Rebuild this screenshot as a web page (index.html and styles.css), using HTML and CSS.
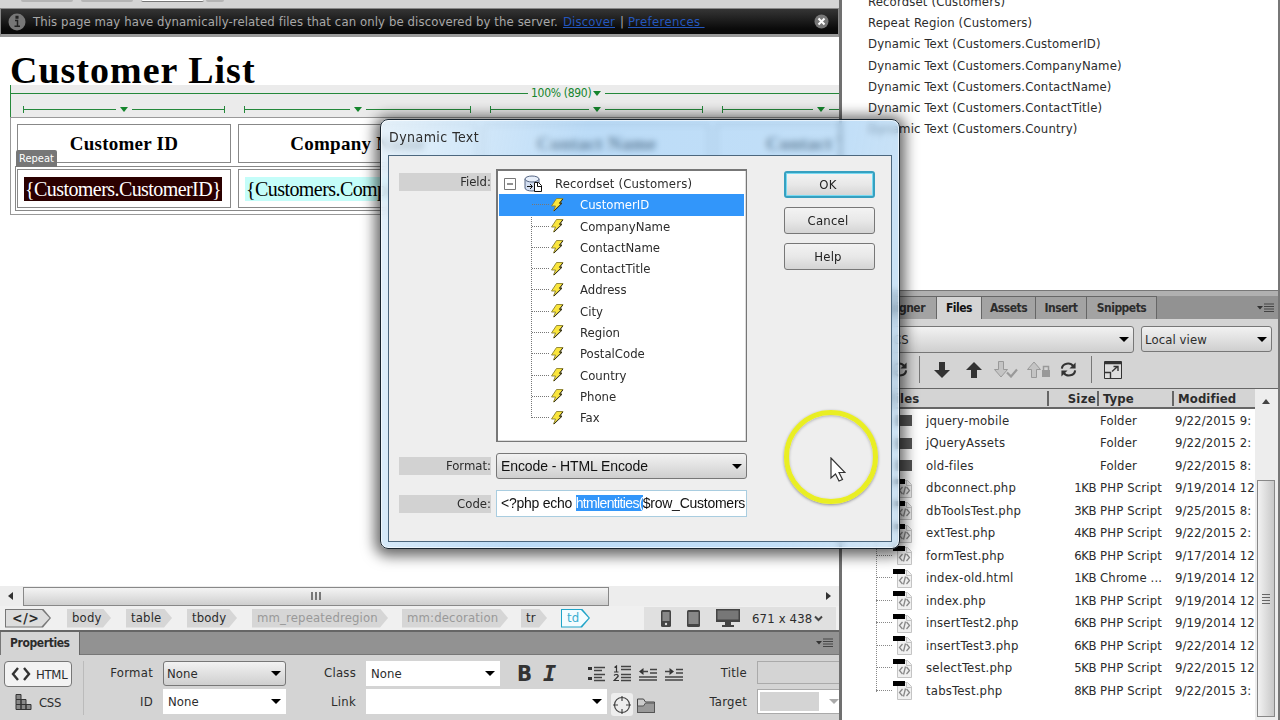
FILE: index.html
```
<!DOCTYPE html>
<html lang="en">
<head>
    <meta charset="UTF-8">
    <meta name="viewport" content="width=device-width, initial-scale=1.0">
    <title>Customer List</title>
    <link rel="stylesheet" href="styles.css">
</head>
<body>

    <!-- Shared icons -->
    <svg class="defs" width="0" height="0">
        <defs>
            <symbol id="bolt" viewBox="0 0 14 16">
                <path d="M6.500 1.500H13L9.500 6h2.500L3.500 14l2-5H1.500z" fill="#fae53c" stroke="#8a8030" stroke-width="0.900"/>
                <path d="M12.800 2 9.500 6.300H12L4 14" fill="none" stroke="#332f18" stroke-width="1"/>
            </symbol>
            <symbol id="doc" viewBox="0 0 20 20">
                <path d="M4.500 2.500h10l4 4v13h-14z" fill="#f0f0f0" stroke="#c4c4c4"/>
                <path d="M13.500 2.500v5h5" fill="none" stroke="#c4c4c4"/>
                <path d="m9.500 9-3 3.500 3 3.500M13.500 9l3 3.500-3 3.500M12.500 8.500l-2 8" fill="none" stroke="#888" stroke-width="1.300"/>
                <path d="M0 1h12v5H0z" fill="#000"/>
            </symbol>
            <symbol id="folder" viewBox="0 0 20 20">
                <path d="M2 5h17v11H2z" fill="#555"/>
            </symbol>
            <symbol id="menu" viewBox="0 0 18 10">
                <path d="M0 3h6L3 6.500z" fill="#333"/>
                <path d="M7 1h10M7 3.500h10M7 6h10M7 8.500h10" stroke="#444"/>
            </symbol>
            <symbol id="sync" viewBox="0 0 18 18">
                <path d="M2 8c.5-6 9-7 12-2.500M16 10c-.5 6-9 7-12 2.500" fill="none" stroke="#333" stroke-width="2.200"/>
                <path d="M16.500 1.500V8H10zM1.500 16.500V10H8z" fill="#333"/>
            </symbol>
        </defs>
    </svg>

    <div class="workspace">

        <!-- Document window -->
        <main class="document">
            <div class="toolbar-edge"><span></span><span></span><span class="field"></span><span class="small"></span></div>
            <div class="notice">
                <svg width="18" height="18" viewBox="0 0 18 18"><circle cx="9" cy="9" r="8.500" fill="#777"/><path d="M7 7.500h2.500V13M6.500 13.300h5.500M8.200 3.500h1.600v1.500H8.200z" fill="none" stroke="#222" stroke-width="1.500"/></svg>
                <span class="notice-text">This page may have dynamically-related files that can only be discovered by the server.</span>
                <a class="discover">Discover</a>
                <span class="bar">|</span>
                <a class="prefs">Preferences&nbsp;</a>
                <svg class="close" width="15" height="15" viewBox="0 0 15 15"><circle cx="7.500" cy="7.500" r="7" fill="#777"/><path d="m4.500 4.500 6 6m0-6-6 6" stroke="#fff" stroke-width="2"/></svg>
            </div>

            <div class="page">
                <h1>Customer List</h1>
                <div class="rulers">
                    <div class="ruler-total">
                        <i class="line first"></i><span>100% (890)</span><b class="tri"></b><i class="line"></i>
                    </div>
                    <div class="ruler-cols columns">
                        <div class="ruler"><i class="line"></i><b class="tri"></b><i class="line"></i></div>
                        <div class="ruler"><i class="line"></i><b class="tri"></b><i class="line"></i></div>
                        <div class="ruler"><i class="line"></i><b class="tri"></b><i class="line"></i></div>
                        <div class="ruler"><i class="line"></i><b class="tri"></b><i class="line"></i></div>
                    </div>
                </div>
                <div class="data-table">
                    <div class="columns head">
                        <div class="cell">Customer ID</div>
                        <div class="cell">Company Name</div>
                        <div class="cell">Contact Name</div>
                        <div class="cell">Contact Title</div>
                    </div>
                    <div class="repeat">
                        <span class="repeat-tag">Repeat</span>
                        <div class="columns">
                            <div class="cell"><span class="dyn selected">{Customers.CustomerID}</span></div>
                            <div class="cell"><span class="dyn">{Customers.CompanyName}</span></div>
                            <div class="cell"></div>
                            <div class="cell"></div>
                        </div>
                    </div>
                </div>
            </div>

            <div class="hscroll">
                <b class="arrow-left"></b>
                <div class="hthumb"><i></i><i></i><i></i></div>
                <b class="arrow-right"></b>
            </div>

            <div class="tag-bar">
                <span class="tag outline code">&lt;/&gt;</span>
                <span class="tag t-body">body</span>
                <span class="tag t-table">table</span>
                <span class="tag t-tbody">tbody</span>
                <span class="tag muted t-region">mm_repeatedregion</span>
                <span class="tag muted t-deco">mm:decoration</span>
                <span class="tag t-tr">tr</span>
                <span class="tag outline current">td</span>
                <div class="devices">
                    <svg width="10" height="17" viewBox="0 0 10 17"><rect width="10" height="17" rx="1.500" fill="#444"/><path d="M1.500 2h7v9h-7z" fill="#888"/><circle cx="5" cy="14" r="1.200" fill="#ddd"/></svg>
                    <svg width="13" height="17" viewBox="0 0 13 17"><rect width="13" height="17" rx="1.500" fill="#444"/><path d="M1.500 2h10v12h-10z" fill="#888"/></svg>
                    <svg width="24" height="18" viewBox="0 0 24 18"><path d="M0 0h24v13H0zM9 13h6v3h3v2H6v-2h3z" fill="#444"/><path d="M1.500 1.500h21v9h-21z" fill="#777"/></svg>
                    <span>671 x 438</span>
                    <svg class="chev" width="9" height="7" viewBox="0 0 9 7"><path d="m1 1.500 3.500 3.500L8 1.500" fill="none" stroke="#444" stroke-width="2"/></svg>
                </div>
            </div>

            <!-- Property inspector -->
            <section class="properties">
                <div class="prop-head"><span class="prop-tab">Properties</span><svg width="18" height="10"><use href="#menu"/></svg></div>
                <div class="prop-body">
                    <div class="modes">
                        <div class="mode active"><svg width="20" height="14" viewBox="0 0 20 14"><path d="m7 1-5 6 5 6M13 1l5 6-5 6" fill="none" stroke="#333" stroke-width="2.400"/></svg>HTML</div>
                        <div class="mode css"><svg width="17" height="16" viewBox="0 0 17 16"><path d="M1 .5h5v5H1zM1 5.500h5v5H1zM1 10.500h5v5H1zM6 5.500h5v5H6zM6 10.500h5v5H6zM11 10.500h5v5h-5z" fill="#888" stroke="#333"/></svg>CSS</div>
                    </div>
                    <div class="labels l-format"><span>Format</span><span>ID</span></div>
                    <div class="fields f-format">
                        <div class="drop raised">None<b></b></div>
                        <div class="drop">None<b></b></div>
                    </div>
                    <div class="labels l-class"><span>Class</span><span>Link</span></div>
                    <div class="fields f-class">
                        <div class="line-one">
                            <div class="drop">None<b></b></div>
                            <span class="bold">B</span><span class="italic">I</span>
                            <svg class="ul" width="18" height="16" viewBox="0 0 18 16"><path d="M0 1h4v3H0zM0 11h4v3H0z" fill="#333"/><path d="M6 1.500h11M6 4.500h8M6 8.500h11M6 11.500h8M6 14.500h11" stroke="#444" stroke-width="1.300"/></svg>
                            <svg class="ol" width="19" height="17" viewBox="0 0 19 17"><path d="M1.500 2.500 3.500 1v6M1 7h4.500M1 10.500c2-2 5-.5 4 1L1 15.500h5" fill="none" stroke="#333" stroke-width="1.200"/><path d="M8 1.500h10M8 4.500h10M8 9.500h10M8 12.500h10M8 15.500h10" stroke="#444" stroke-width="1.300"/></svg>
                            <svg class="out" width="18" height="14" viewBox="0 0 18 14"><path d="M0 4.500 4.500 1v7z" fill="#333"/><path d="M3 4.500h6M11 2.500h7M11 6h7M0 10h18M0 13h18" stroke="#444" stroke-width="1.600"/></svg>
                            <svg class="in" width="18" height="14" viewBox="0 0 18 14"><path d="M9 4.500 4.500 1v7z" fill="#333"/><path d="M0 4.500h6M11 2.500h7M11 6h7M0 10h18M0 13h18" stroke="#444" stroke-width="1.600"/></svg>
                        </div>
                        <div class="line-two">
                            <div class="drop wide"><b></b></div>
                            <span class="target-btn"><svg width="18" height="18" viewBox="0 0 18 18"><circle cx="9" cy="9" r="7.500" fill="none" stroke="#444" stroke-width="1.200"/><path d="M9 0v5M9 13v5M0 9h5M13 9h5" stroke="#444" stroke-width="1.200"/></svg></span>
                            <svg width="18" height="15" viewBox="0 0 18 15"><path d="M.5 14.500V1h6l2 3h9v10.500z" fill="#ccc" stroke="#444"/><path d="M.5 8h6l2-3h9v9.500H.5z" fill="#999" stroke="#555"/></svg>
                        </div>
                    </div>
                    <div class="labels l-title"><span>Title</span><span>Target</span></div>
                    <div class="fields f-title"><div class="off"></div><div class="target"><i></i><b></b></div></div>
                </div>
            </section>
        </main>

        <!-- Panels -->
        <aside class="panels">
            <ul class="behaviors">
                <li>Recordset (Customers)</li>
                <li>Repeat Region (Customers)</li>
                <li>Dynamic Text (Customers.CustomerID)</li>
                <li>Dynamic Text (Customers.CompanyName)</li>
                <li>Dynamic Text (Customers.ContactName)</li>
                <li>Dynamic Text (Customers.ContactTitle)</li>
                <li>Dynamic Text (Customers.Country)</li>
            </ul>
            <div class="tabs">
                <span class="tab designer">CSS Designer</span>
                <span class="tab files active">Files</span>
                <span class="tab assets">Assets</span>
                <span class="tab insert">Insert</span>
                <span class="tab snippets">Snippets</span>
                <svg width="18" height="10"><use href="#menu"/></svg>
            </div>
            <div class="file-tools">
                <div class="selects">
                    <div class="drop raised site">CS<b></b></div>
                    <div class="drop raised view">Local view<b></b></div>
                </div>
                <div class="file-icons">
                    <svg class="i-refresh" width="17" height="17"><use href="#sync"/></svg>
                    <i class="sep"></i>
                    <svg class="i-get" width="16" height="16" viewBox="0 0 16 16"><path d="M5 0h6v8h5l-8 8-8-8h5z" fill="#333"/></svg>
                    <svg class="i-put" width="16" height="16" viewBox="0 0 16 16"><path d="M5 16h6V8h5L8 0 0 8h5z" fill="#333"/></svg>
                    <svg class="i-out" width="24" height="17" viewBox="0 0 24 17"><path d="M4.500.5h5v8h4L7 16 .5 8.500h4z" fill="#c4c4c4" stroke="#999"/><path d="m13 11.500 4 4 6-7" fill="none" stroke="#999" stroke-width="2.200"/></svg>
                    <svg class="i-in" width="24" height="17" viewBox="0 0 24 17"><path d="M4.500 16.500h5v-8h4L7 1 .5 8.500h4z" fill="#c4c4c4" stroke="#999"/><path d="M15 9h8v7h-8z" fill="#999"/><path d="M16.500 9V5.500h5V9" fill="none" stroke="#999" stroke-width="1.500"/></svg>
                    <svg class="i-sync" width="17" height="17"><use href="#sync"/></svg>
                    <i class="sep last"></i>
                    <svg class="i-expand" width="18" height="18" viewBox="0 0 18 18"><path d="M.5.500h17v17H.5z" fill="#ddd" stroke="#333"/><path d="M1 2h16" stroke="#333" stroke-width="2.500"/><path d="M.5 11.500h6v6M8 10.500l5-4.500M9.500 5.500H14V10" fill="none" stroke="#333" stroke-width="1.400"/></svg>
                </div>
            </div>
            <div class="file-panel">
                <div class="file-table">
                    <div class="file-row header"><span class="name">Local Files</span><span class="size">Size</span><span class="type">Type</span><span class="mod">Modified</span></div>
                    <div class="file-list">
                        <div class="file-row"><svg><use href="#folder"/></svg><span class="name">jquery-mobile</span><span class="size"></span><span class="type">Folder</span><span class="mod">9/22/2015 9:</span></div>
                        <div class="file-row"><svg><use href="#folder"/></svg><span class="name">jQueryAssets</span><span class="size"></span><span class="type">Folder</span><span class="mod">9/22/2015 2:</span></div>
                        <div class="file-row"><svg><use href="#folder"/></svg><span class="name">old-files</span><span class="size"></span><span class="type">Folder</span><span class="mod">9/22/2015 8:</span></div>
                        <div class="file-row"><svg><use href="#doc"/></svg><span class="name">dbconnect.php</span><span class="size">1KB</span><span class="type">PHP Script</span><span class="mod">9/19/2014 12</span></div>
                        <div class="file-row"><svg><use href="#doc"/></svg><span class="name">dbToolsTest.php</span><span class="size">3KB</span><span class="type">PHP Script</span><span class="mod">9/25/2015 8:</span></div>
                        <div class="file-row"><svg><use href="#doc"/></svg><span class="name">extTest.php</span><span class="size">4KB</span><span class="type">PHP Script</span><span class="mod">9/22/2015 2:</span></div>
                        <div class="file-row"><svg><use href="#doc"/></svg><span class="name">formTest.php</span><span class="size">6KB</span><span class="type">PHP Script</span><span class="mod">9/17/2014 12</span></div>
                        <div class="file-row"><svg><use href="#doc"/></svg><span class="name">index-old.html</span><span class="size">1KB</span><span class="type">Chrome ...</span><span class="mod">9/19/2014 12</span></div>
                        <div class="file-row"><svg><use href="#doc"/></svg><span class="name">index.php</span><span class="size">1KB</span><span class="type">PHP Script</span><span class="mod">9/19/2014 12</span></div>
                        <div class="file-row"><svg><use href="#doc"/></svg><span class="name">insertTest2.php</span><span class="size">6KB</span><span class="type">PHP Script</span><span class="mod">9/19/2014 12</span></div>
                        <div class="file-row"><svg><use href="#doc"/></svg><span class="name">insertTest3.php</span><span class="size">6KB</span><span class="type">PHP Script</span><span class="mod">9/22/2014 12</span></div>
                        <div class="file-row"><svg><use href="#doc"/></svg><span class="name">selectTest.php</span><span class="size">5KB</span><span class="type">PHP Script</span><span class="mod">9/22/2015 12</span></div>
                        <div class="file-row"><svg><use href="#doc"/></svg><span class="name">tabsTest.php</span><span class="size">8KB</span><span class="type">PHP Script</span><span class="mod">9/22/2015 3:</span></div>
                    </div>
                </div>
                <div class="vscroll">
                    <b class="arrow-up"></b>
                    <div class="vthumb"><i></i><i></i><i></i><i></i></div>
                </div>
            </div>
        </aside>
    </div>

    <!-- Dynamic Text dialog -->
    <div class="dialog">
        <div class="dialog-title">Dynamic Text</div>
        <div class="dialog-body">
            <div class="form">
                <label>Field:</label>
                <div class="tree">
                    <div class="tree-root">
                        <svg width="12" height="12" viewBox="0 0 12 12"><path d="M.5.500h11v11H.5z" fill="#fff" stroke="#777"/><path d="M3 6h6" stroke="#222"/></svg>
                        <svg width="18" height="18" viewBox="0 0 18 18"><path d="M1 4v9c0 4 14 4 14 0V4" fill="#d3def0" stroke="#556583"/><ellipse cx="8" cy="4" rx="7" ry="3" fill="#e8effa" stroke="#556583"/><path d="M10.500 7.500h4l3 3v6h-7z" fill="#fff" stroke="#111"/><path d="M13.500 8v3.500h4M3 11.500h5M6 9l2.500 2.500L6 14" fill="none" stroke="#111"/></svg>
                        Recordset (Customers)
                    </div>
                    <div class="tree-item selected"><svg><use href="#bolt"/></svg>CustomerID</div>
                    <div class="tree-item"><svg><use href="#bolt"/></svg>CompanyName</div>
                    <div class="tree-item"><svg><use href="#bolt"/></svg>ContactName</div>
                    <div class="tree-item"><svg><use href="#bolt"/></svg>ContactTitle</div>
                    <div class="tree-item"><svg><use href="#bolt"/></svg>Address</div>
                    <div class="tree-item"><svg><use href="#bolt"/></svg>City</div>
                    <div class="tree-item"><svg><use href="#bolt"/></svg>Region</div>
                    <div class="tree-item"><svg><use href="#bolt"/></svg>PostalCode</div>
                    <div class="tree-item"><svg><use href="#bolt"/></svg>Country</div>
                    <div class="tree-item"><svg><use href="#bolt"/></svg>Phone</div>
                    <div class="tree-item"><svg><use href="#bolt"/></svg>Fax</div>
                </div>
                <label>Format:</label>
                <div class="drop raised format">Encode - HTML Encode<b></b></div>
                <label>Code:</label>
                <div class="code-input">&lt;?php echo <mark>htmlentities(</mark>$row_Customers</div>
            </div>
            <div class="buttons">
                <button class="default">OK</button>
                <button>Cancel</button>
                <button>Help</button>
            </div>
        </div>
    </div>

    <!-- Pointer highlight -->
    <div class="ring"></div>
    <svg class="pointer" width="16" height="26" viewBox="0 0 16 26"><path d="M1 1v20l4.500-4 3.500 7 3.500-1.500-3.500-7H15z" fill="#fff" stroke="#333" stroke-width="1.200"/></svg>

</body>
</html>
```
FILE: styles.css
```
* {
    box-sizing: border-box;
}
body {
    margin: 0;
    width: 1280px;
    height: 720px;
    overflow: hidden;
    position: relative;
    font-family: "DejaVu Sans Condensed", "Noto Sans", sans-serif;
    font-size: 13px;
    color: #2c2c2c;
    background-color: #fff;
}
.defs {
    position: absolute;
}
svg {
    flex: none;
}
.workspace {
    display: flex;
    height: 720px;
}
.document {
    width: 839px;
    height: 720px;
    flex: none;
    display: flex;
    flex-direction: column;
    overflow: hidden;
}

/* notice bar */
.toolbar-edge {
    height: 8px;
    flex: none;
    display: flex;
    gap: 8px;
    padding-left: 21px;
    background-color: #d4d4d4;
}
.toolbar-edge span {
    width: 52px;
    height: 2px;
    border-radius: 0 0 3px 3px;
    background-color: #b5b5b5;
}
.toolbar-edge .field {
    width: 63px;
    background-color: #fff;
    border-bottom: 1px solid #777;
}
.toolbar-edge .small {
    width: 18px;
    margin-left: -6px;
}
.notice {
    height: 29px;
    flex: none;
    display: flex;
    align-items: center;
    padding: 0 9px 0 7px;
    border: 1px solid #888;
    border-bottom: 3px solid #999;
    background: linear-gradient(#353535, #0a0a0a 80%);
    color: #a8a8a8;
    white-space: nowrap;
}
.notice-text {
    margin-left: 7px;
    letter-spacing: 0.100px;
}
.notice a {
    color: #2457bd;
    text-decoration: underline;
}
.discover {
    margin-left: 5px;
    letter-spacing: 0.150px;
}
.notice .bar {
    margin: 0 4px 0 5px;
}
.prefs {
    letter-spacing: 0.350px;
}
.close {
    margin-left: auto;
}

/* page being edited */
.page {
    height: 549px;
    flex: none;
    padding-left: 10px;
    background-color: #fff;
    font-family: "Liberation Serif", serif;
    color: #000;
}
h1 {
    margin: 0;
    height: 48px;
    line-height: 67px;
    font-size: 38px;
    letter-spacing: 1px;
    white-space: nowrap;
}
.rulers {
    height: 32px;
    border-left: 1px solid #27893b;
    background-color: #ebebeb;
}
.ruler-total {
    height: 16px;
    display: flex;
    align-items: center;
    font-family: "DejaVu Sans Condensed", sans-serif;
    font-size: 12px;
    letter-spacing: -0.300px;
    color: #15852c;
}
.line {
    flex: 1;
    height: 1px;
    background-color: #24883a;
}
.line.first {
    flex: none;
    width: 517px;
    margin-right: 3px;
}
.tri {
    border: 4px solid transparent;
    border-top: 5px solid #15852c;
    border-bottom: 0;
    margin: 0 4px;
}
.ruler-total .tri {
    margin: 1px 4px 0 2px;
}
.columns {
    display: grid;
    grid-template-columns: 214px 239px 225px 210px;
    column-gap: 7px;
}
.ruler-cols {
    padding: 5px 0 0 6px;
}
.ruler {
    display: flex;
    align-items: center;
    height: 7px;
    margin: 0 6px;
    border-left: 1px solid #24883a;
    border-right: 1px solid #24883a;
}
.data-table {
    width: 940px;
    height: 98px;
    border: 1px solid #999;
    padding: 6px 0 0 4px;
}
.head {
    padding-left: 2px;
}
.cell {
    height: 39px;
    border: 1px solid #888;
    display: flex;
    align-items: center;
    padding-left: 6px;
    font-size: 20px;
}
.head .cell {
    justify-content: center;
    padding: 0;
    font-size: 19px;
    font-weight: bold;
    letter-spacing: 0.250px;
}
.repeat {
    position: relative;
    margin-top: 3px;
    height: 45px;
    border: 1px solid #888;
    padding: 2px 0 0 1px;
}
.repeat-tag {
    position: absolute;
    left: 0;
    top: -17px;
    width: 41px;
    height: 17px;
    line-height: 17px;
    text-align: center;
    border-radius: 2px 2px 0 0;
    background-color: #777;
    color: #fff;
    font-family: "DejaVu Sans Condensed", sans-serif;
    font-size: 11px;
}
.dyn {
    height: 24px;
    line-height: 24px;
    padding: 0 1px;
    letter-spacing: -0.570px;
    background-color: #c4fdf9;
}
.dyn.selected {
    background-color: #2b0000;
    color: #fff;
}

/* horizontal scrollbar */
.hscroll {
    height: 20px;
    flex: none;
    display: flex;
    align-items: center;
    padding: 0 8px;
    background-color: #ededed;
}
.arrow-left, .arrow-right {
    border: 4px solid transparent;
}
.arrow-left {
    border-left: 0;
    border-right: 5px solid #333;
}
.arrow-right {
    border-right: 0;
    border-left: 5px solid #333;
    margin-left: auto;
}
.hthumb {
    width: 586px;
    height: 19px;
    margin-left: 10px;
    border: 1px solid #888;
    background: linear-gradient(#f4f4f4, #cfcfcf);
    display: flex;
    align-items: center;
    justify-content: center;
    gap: 2px;
}
.hthumb i {
    width: 2px;
    height: 8px;
    background-color: #777;
}

/* tag selector */
.tag-bar {
    height: 24px;
    flex: none;
    display: flex;
    align-items: center;
    padding-left: 5px;
    background-color: #f0f0f0;
    letter-spacing: 0.150px;
}
.tag {
    height: 19px;
    line-height: 18px;
    padding-left: 5px;
    background-color: #d6d6d6;
    clip-path: polygon(0 0, calc(100% - 8px) 0, 100% 50%, calc(100% - 8px) 100%, 0 100%);
    white-space: nowrap;
    flex: none;
}
.muted {
    color: #999;
}
.t-body { width: 44px; margin-left: 16px; }
.t-table { width: 46px; margin-left: 15px; }
.t-tbody { width: 50px; margin-left: 15px; }
.t-region { width: 136px; margin-left: 15px; }
.t-deco { width: 106px; margin-left: 14px; }
.t-tr { width: 26px; margin-left: 13px; }
.outline {
    position: relative;
    z-index: 0;
    background-color: #777;
}
.outline::before {
    content: "";
    position: absolute;
    inset: 1px 1.500px 1px 1px;
    z-index: -1;
    background-color: #ddd;
    clip-path: polygon(0 0, calc(100% - 8px) 0, 100% 50%, calc(100% - 8px) 100%, 0 100%);
}
.code {
    width: 46px;
    padding-left: 7px;
    font-weight: bold;
    font-size: 14px;
    letter-spacing: 0.600px;
}
.current {
    width: 29px;
    margin-left: 14px;
    padding-left: 6px;
    color: #3aaed0;
    background-color: #20a4c8;
}
.current::before {
    background-color: #f4fcff;
}
.devices {
    width: 192px;
    height: 23px;
    margin-left: auto;
    margin-right: 3px;
    display: flex;
    align-items: center;
    padding-left: 17px;
    background-color: #e0e0e0;
    white-space: nowrap;
}
.devices svg + svg {
    margin-left: 16px;
}
.devices span {
    margin: 0 2px 0 12px;
}

/* property inspector */
.properties {
    flex: 1;
    border-top: 2px solid #666;
    background-color: #d4d4d4;
}
.prop-head {
    height: 23px;
    display: flex;
    align-items: center;
    background-color: #929292;
    border-bottom: 1px solid #777;
    padding-right: 5px;
}
.prop-head svg {
    margin-left: auto;
}
.prop-tab {
    width: 80px;
    height: 23px;
    line-height: 23px;
    padding-left: 9px;
    background-color: #d4d4d4;
    border-left: 1px solid #777;
    border-right: 1px solid #666;
    font-weight: bold;
    font-size: 12px;
    letter-spacing: -0.400px;
}
.prop-body {
    display: flex;
    padding: 6px 0 0 4px;
    height: 65px;
}
.modes {
    width: 80px;
    height: 54px;
    border-right: 1px solid #bbb;
}
.mode {
    width: 68px;
    height: 26px;
    display: flex;
    align-items: center;
    gap: 5px;
    padding-left: 6px;
    border: 1px solid transparent;
    letter-spacing: -0.300px;
}
.mode.active {
    border-color: #777;
    border-radius: 4px;
    background-color: #f3f3f3;
}
.css {
    margin-top: 2px;
    padding-left: 10px;
    gap: 7px;
}
.labels {
    display: flex;
    flex-direction: column;
    gap: 5px;
    text-align: right;
    letter-spacing: 0.250px;
}
.labels span {
    height: 24px;
    line-height: 24px;
}
.l-format { width: 69px; }
.l-class { width: 70px; }
.l-title { width: 61px; }
.fields {
    display: flex;
    flex-direction: column;
    gap: 3px;
    margin-left: 10px;
}
.f-format { width: 123px; }
.f-class { width: 320px; }
.drop {
    height: 25px;
    display: flex;
    align-items: center;
    justify-content: space-between;
    padding: 0 5px;
    background-color: #fff;
    letter-spacing: 0.100px;
}
.drop b, .target b {
    border: 5px solid transparent;
    border-top: 5px solid #000;
    border-bottom: 0;
}
.raised {
    border: 1px solid #777;
    border-radius: 3px;
    padding: 0 4px 0 3px;
    background: linear-gradient(#f2f2f2, #cfcfcf);
}
.line-one, .line-two {
    display: flex;
    height: 25px;
    align-items: center;
}
.line-one .drop {
    width: 134px;
}
.bold, .italic {
    font-size: 22px;
    font-weight: bold;
    color: #333;
    width: 16px;
    line-height: 24px;
}
.bold {
    margin-left: 17px;
}
.italic {
    margin-left: 10px;
    font-family: "DejaVu Sans Mono", monospace;
    font-style: italic;
}
.ul { margin-left: 29px; }
.ol { margin-left: 7px; }
.out { margin-left: 7px; }
.in { margin-left: 8px; }
.wide {
    width: 241px;
    justify-content: flex-end;
}
.target-btn {
    width: 22px;
    height: 23px;
    margin: 6px 4px 0 4px;
    display: flex;
    align-items: center;
    justify-content: center;
    background-color: #eee;
    border-radius: 3px;
}
.line-two > svg {
    margin-top: 7px;
}
.f-title {
    width: 82px;
}
.off, .target {
    height: 23px;
    border: 1px solid #aaa;
    border-right: 0;
}
.target {
    height: 25px;
    margin-top: 2px;
    background-color: #fff;
    display: flex;
    align-items: center;
}
.target i {
    width: 60px;
    height: 19px;
    margin: 0 10px 0 2px;
    background-color: #d4d4d4;
}
.target b {
    border-top-color: #aaa;
}

/* right panels */
.panels {
    flex: 1;
    min-width: 0;
    height: 720px;
    display: flex;
    flex-direction: column;
    border-left: 3px solid #707070;
    border-right: 2px solid #777;
}
.behaviors {
    margin: 0;
    padding: 0 0 0 26px;
    height: 291px;
    flex: none;
    list-style: none;
    overflow: hidden;
    border-bottom: 1px solid #777;
}
.behaviors li {
    height: 21.200px;
    line-height: 21.200px;
    letter-spacing: 0.150px;
    white-space: nowrap;
}
.behaviors li:first-child {
    margin-top: -9px;
}
.tabs {
    height: 28px;
    flex: none;
    display: flex;
    align-items: center;
    border-top: 5px solid #b0b0b0;
    background-color: #929292;
    padding-right: 3px;
    font-weight: bold;
    font-size: 12px;
    letter-spacing: -0.500px;
    white-space: nowrap;
}
.tab {
    height: 23px;
    line-height: 23px;
    text-align: center;
    border-right: 1px solid #666;
    border-top: 1px solid #666;
    background-color: #a3a3a3;
}
.tab.active {
    background-color: #d4d4d4;
    color: #111;
}
.designer { width: 95px; text-align: right; padding-right: 11px; }
.files { width: 45px; }
.assets { width: 54px; }
.insert { width: 51px; }
.snippets { width: 70px; }
.tabs svg {
    margin-left: auto;
}
.file-tools {
    height: 69px;
    flex: none;
    background-color: #d4d4d4;
    padding-top: 7px;
}
.selects {
    display: flex;
    gap: 7px;
}
.site {
    width: 292px;
    padding-left: 50px;
    height: 27px;
}
.view {
    width: 131px;
    height: 26px;
}
.file-icons {
    display: flex;
    align-items: center;
    height: 33px;
    padding-left: 49px;
}
.sep {
    width: 1px;
    height: 27px;
    margin-left: 11px;
    background-color: #777;
}
.i-get { margin-left: 14px; }
.i-put { margin-left: 16px; }
.i-out { margin-left: 12px; }
.i-in { margin-left: 9px; }
.i-sync { margin-left: 9px; }
.sep.last { margin-left: 14px; }
.i-expand { margin-left: 12px; }
.file-panel {
    flex: 1;
    display: flex;
    border-top: 1px solid #666;
    min-height: 0;
}
.file-table {
    width: 413px;
    flex: none;
    overflow: hidden;
}
.file-row {
    height: 22.500px;
    display: flex;
    align-items: center;
    white-space: nowrap;
    letter-spacing: 0.150px;
}
.file-row svg {
    width: 20px;
    height: 22px;
    margin-right: 13px;
    margin-left: -33px;
}
.file-row .name {
    width: 122px;
    letter-spacing: 0.200px;
}
.file-row .size {
    width: 48px;
    text-align: right;
    letter-spacing: -0.500px;
}
.file-row .type {
    width: 79px;
    padding-left: 4px;
}
.file-row .mod {
    width: 80px;
    letter-spacing: 0.100px;
}
.file-row.header {
    height: 20px;
    background-color: #d4d4d4;
    border-bottom: 2px solid #666;
    font-weight: bold;
    letter-spacing: 0.100px;
}
.header .name {
    width: 207px;
    padding-left: 6px;
    border-right: 2px solid #666;
}
.header .size {
    width: 50px;
    padding-right: 1px;
    border-right: 2px solid #666;
    letter-spacing: 0.300px;
}
.header .type {
    width: 75px;
    border-right: 2px solid #666;
}
.header .mod {
    padding-left: 4px;
}
.file-list {
    position: relative;
    padding-left: 84px;
}
.file-list::before {
    content: "";
    position: absolute;
    left: 34px;
    top: 0;
    height: 283px;
    border-left: 1px dotted #888;
}
.file-list .file-row::before {
    content: "";
    width: 16px;
    margin-left: -50px;
    margin-right: 34px;
    flex: none;
    border-top: 1px dotted #888;
}
.vscroll {
    flex: 1;
    padding: 10px 3px 0 2px;
    background-color: #ededed;
}
.arrow-up {
    display: block;
    width: 0;
    margin: 0 auto 76px;
    border: 4px solid transparent;
    border-top: 0;
    border-bottom: 5px solid #444;
}
.vthumb {
    height: 237px;
    border: 1px solid #888;
    background: linear-gradient(90deg, #f2f2f2, #c8c8c8);
    display: flex;
    flex-direction: column;
    align-items: center;
    justify-content: center;
    gap: 2px;
}
.vthumb i {
    width: 8px;
    height: 1px;
    background-color: #666;
}

/* dialog */
.dialog {
    position: absolute;
    left: 380px;
    top: 119px;
    width: 520px;
    height: 430px;
    padding: 0 7px 7px;
    border: 1px solid #18242e;
    border-radius: 8px;
    background: linear-gradient(100deg, rgba(225, 239, 249, 0.850), rgba(150, 200, 243, 0.640) 35%, rgba(160, 205, 243, 0.640) 80%, rgba(190, 218, 240, 0.700));
    backdrop-filter: blur(3px);
    box-shadow: 0 2px 14px 5px rgba(0, 0, 0, 0.600), inset 0 0 0 1px rgba(255, 255, 255, 0.600);
}
.dialog-title {
    height: 35px;
    line-height: 34px;
    padding-left: 1px;
    font-size: 14px;
    letter-spacing: 0.450px;
}
.dialog-body {
    height: 387px;
    padding: 13px 0 0 10px;
    border: 1px solid #4c677e;
    background-color: #eee;
    display: flex;
}
.form {
    width: 348px;
    display: grid;
    grid-template-columns: 92px 251px;
    grid-template-rows: 273px 26px 27px;
    gap: 11px 5px;
    align-items: center;
}
.form label {
    height: 18px;
    line-height: 17px;
    background-color: #d2d2d2;
    text-align: right;
}
.form label:first-child {
    align-self: start;
    margin-top: 4px;
}
.tree {
    height: 273px;
    border: 2px solid #777;
    border-right-width: 1px;
    border-bottom-width: 1px;
    padding: 2px 2px 0 1px;
    background-color: #fff;
    position: relative;
    box-shadow: inset -1px -1px #ddd;
}
.tree::before {
    content: "";
    position: absolute;
    left: 33px;
    top: 24px;
    height: 223px;
    border-left: 1px dotted #777;
}
.tree-root, .tree-item {
    height: 21.270px;
    display: flex;
    align-items: center;
    position: relative;
    white-space: nowrap;
    letter-spacing: 0;
}
.tree-root {
    padding-left: 5px;
    letter-spacing: 0.150px;
}
.tree-root svg + svg {
    margin: 0 13px 0 8px;
}
.tree-item::before {
    content: "";
    width: 17px;
    margin-left: 33px;
    border-top: 1px dotted #777;
}
.tree-item svg {
    width: 14px;
    height: 16px;
    margin: 0 16px 0 1px;
}
.tree-item.selected {
    background-color: #3296fa;
    color: #fff;
}
.format, .code-input {
    font-family: "Liberation Sans", sans-serif;
    font-size: 14px;
    color: #111;
}
.format {
    height: 26px;
    letter-spacing: -0.100px;
    padding-left: 4px;
}
.code-input {
    height: 27px;
    line-height: 25px;
    padding-left: 4px;
    overflow: hidden;
    white-space: nowrap;
    letter-spacing: -0.250px;
    border: 1px solid #a9cde0;
    background-color: #fff;
}
.code-input mark {
    background-color: #3296fa;
    color: #fff;
    letter-spacing: -0.650px;
}
.buttons {
    display: flex;
    flex-direction: column;
    gap: 9px;
    padding: 2px 0 0 37px;
}
.buttons button {
    width: 91px;
    height: 27px;
    padding: 0 3px 0 0;
    font-family: inherit;
    font-size: 13px;
    letter-spacing: 0.200px;
    color: #222;
    border: 1px solid #777;
    border-radius: 3px;
    background: linear-gradient(#f3f3f3, #e8e8e8 50%, #d4d4d4);
}
.buttons .default {
    border: 2px solid #36a0c0;
    box-shadow: inset 0 0 0 1px #78daf2;
}

/* pointer */
.ring {
    position: absolute;
    left: 784px;
    top: 410px;
    width: 94px;
    height: 94px;
    border: 5px solid #e9ee23;
    border-radius: 50%;
    box-shadow: 0 1px 3px rgba(0, 0, 0, 0.400), inset 0 1px 3px rgba(0, 0, 0, 0.250);
}
.pointer {
    position: absolute;
    left: 830px;
    top: 457px;
}
```
